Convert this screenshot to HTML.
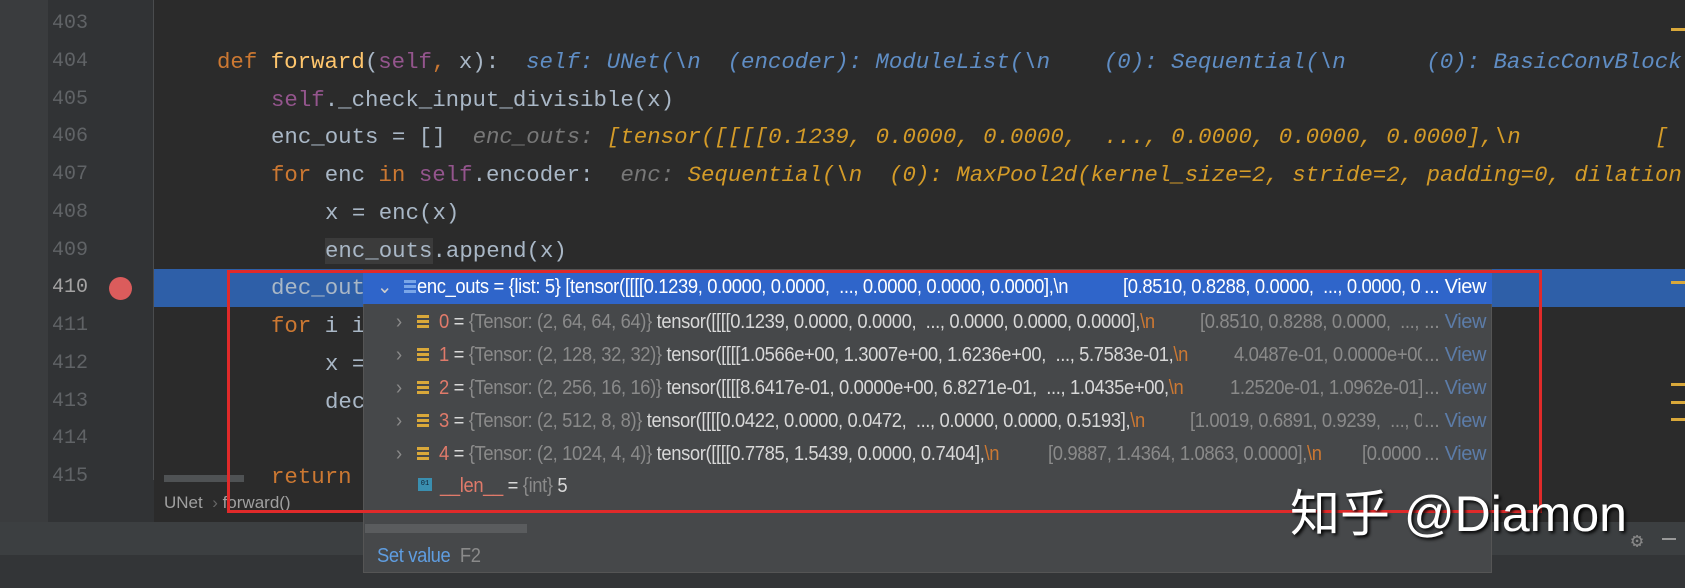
<!DOCTYPE html>
<html><head><meta charset="utf-8"><style>
*{margin:0;padding:0;box-sizing:border-box}
body{width:1685px;height:588px;overflow:hidden;background:#2b2b2b;position:relative;font-family:"Liberation Mono",monospace}
.abs{position:absolute;white-space:pre}
.ln{position:absolute;left:52px;width:40px;color:#606366;font-size:20px;line-height:38px;height:38px}
.code{position:absolute;font-size:22.4px;line-height:38px;height:38px;color:#a9b7c6;white-space:pre}
.kw{color:#cc7832}.fn{color:#ffc66d}.sf{color:#94558d}
.hint{font-style:italic;color:#5f8dc4}
.hg{font-style:italic;color:#787878}
.ho{font-style:italic;color:#d49b28}
.p{font-family:"Liberation Sans",sans-serif;font-size:20px;letter-spacing:-0.4px;color:#d8d8d8;position:absolute;white-space:pre;line-height:22px;transform:scaleX(0.92);transform-origin:0 0}
.g{color:#8a8a8a}.o{color:#cc7832}.r{color:#e07a6a}
.row{position:absolute;left:363px;width:1129px;height:33px;overflow:hidden}
.view{position:absolute;right:6px;color:#5c7ca8;font-family:"Liberation Sans",sans-serif;font-size:20px;letter-spacing:-0.4px;line-height:22px;background:#46484a;padding-left:2px}
.bars{position:absolute;width:12px;height:14px;background:repeating-linear-gradient(#d9a83a 0 3px,transparent 3px 5px)}
</style></head><body>
<div class="abs" style="left:0;top:0;width:48px;height:588px;background:#3a3c3e"></div>
<div class="abs" style="left:48px;top:0;width:106px;height:525px;background:#313335"></div>
<div class="abs" style="left:153px;top:0;width:1px;height:480px;background:#4a4c4e"></div>
<div class="abs" style="left:154px;top:269px;width:1531px;height:38px;background:#2e5fa8"></div>
<div class="ln" style="top:5px">403</div><div class="ln" style="top:43px">404</div><div class="ln" style="top:81px">405</div><div class="ln" style="top:118px">406</div><div class="ln" style="top:156px">407</div><div class="ln" style="top:194px">408</div><div class="ln" style="top:232px">409</div><div class="ln" style="top:269px;color:#a4a3a3">410</div><div class="ln" style="top:307px">411</div><div class="ln" style="top:345px">412</div><div class="ln" style="top:383px">413</div><div class="ln" style="top:420px">414</div><div class="ln" style="top:458px">415</div>
<div class="abs" style="left:109px;top:277px;width:23px;height:23px;border-radius:50%;background:#db5c5c"></div>
<div class="code" style="left:217px;top:43px"><span class="kw">def </span><span class="fn">forward</span>(<span class="sf">self</span><span class="kw">, </span>x):  <span class="hint">self: UNet(\n  (encoder): ModuleList(\n    (0): Sequential(\n      (0): BasicConvBlock</span></div>
<div class="code" style="left:271px;top:81px"><span class="sf">self</span>._check_input_divisible(x)</div>
<div class="code" style="left:271px;top:118px">enc_outs = []  <span class="hg">enc_outs: </span><span class="ho">[tensor([[[[0.1239, 0.0000, 0.0000,  ..., 0.0000, 0.0000, 0.0000],\n          [</span></div>
<div class="code" style="left:271px;top:156px"><span class="kw">for </span>enc <span class="kw">in </span><span class="sf">self</span>.encoder:  <span class="hg">enc: </span><span class="ho">Sequential(\n  (0): MaxPool2d(kernel_size=2, stride=2, padding=0, dilation</span></div>
<div class="code" style="left:325px;top:194px">x = enc(x)</div>
<div class="code" style="left:325px;top:232px"><span style="background:#3b3b3b">enc_outs</span>.append(x)</div>
<div class="code" style="left:271px;top:269px">dec_out</div>
<div class="code" style="left:271px;top:307px"><span class="kw">for </span>i i</div>
<div class="code" style="left:325px;top:345px">x =</div>
<div class="code" style="left:325px;top:383px">dec</div>
<div class="code" style="left:271px;top:458px"><span class="kw">return</span></div>
<div class="abs" style="left:1671px;top:28px;width:14px;height:3px;background:#d9a83a"></div>
<div class="abs" style="left:1671px;top:281px;width:14px;height:3px;background:#d9a83a"></div>
<div class="abs" style="left:1671px;top:383px;width:14px;height:3px;background:#d9a83a"></div>
<div class="abs" style="left:1671px;top:401px;width:14px;height:3px;background:#d9a83a"></div>
<div class="abs" style="left:1671px;top:418px;width:14px;height:3px;background:#d9a83a"></div>
<div class="abs" style="left:164px;top:475px;width:80px;height:7px;background:#4f5254"></div>
<div class="abs" style="left:164px;top:493px;font-family:'Liberation Sans',sans-serif;font-size:17px;color:#a0a0a0">UNet  <span style="color:#666">›</span> forward()</div>
<div class="abs" style="left:0;top:522px;width:1685px;height:33px;background:#3c3f41"></div>
<div class="abs" style="left:0;top:555px;width:1685px;height:33px;background:#333537"></div>
<div class="abs" style="left:363px;top:269px;width:1129px;height:304px;background:#46484a;border:1px solid #555"></div>
<div class="abs" style="left:363px;top:270px;width:1129px;height:34px;background:#2f65ca"></div>
<div class="row" style="top:274px">
<span class="p" style="left:14px;top:2px;color:#ccc">⌄</span>
<div class="abs" style="left:41px;top:6px;width:12px;height:14px;background:repeating-linear-gradient(#7aa6e8 0 3px,transparent 3px 5px)"></div>
<span class="p" style="left:54px;top:2px;color:#fff">enc_outs = {list: 5} [tensor([[[[0.1239, 0.0000, 0.0000,  ..., 0.0000, 0.0000, 0.0000],\n</span>
<span class="p" style="left:760px;top:2px;color:#fff">[0.8510, 0.8288, 0.0000,  ..., 0.0000, 0.0(</span>
<span class="view" style="top:2px;color:#fff;background:#2f65ca">... View</span></div>
<div class="row" style="top:306px"><span class="p g" style="left:33px;top:5px">›</span><div class="bars" style="left:54px;top:9px"></div><span class="p" style="left:76px;top:5px"><span class="r">0</span> = <span class="g">{Tensor: (2, 64, 64, 64)}</span> tensor([[[[0.1239, 0.0000, 0.0000,  ..., 0.0000, 0.0000, 0.0000],<span class="o">\n</span></span><span class="p g" style="left:837px;top:5px">[0.8510, 0.8288, 0.0000,  ..., 0.</span><span class="view" style="top:5px"><span class="g">...</span> View</span></div>
<div class="row" style="top:339px"><span class="p g" style="left:33px;top:5px">›</span><div class="bars" style="left:54px;top:9px"></div><span class="p" style="left:76px;top:5px"><span class="r">1</span> = <span class="g">{Tensor: (2, 128, 32, 32)}</span> tensor([[[[1.0566e+00, 1.3007e+00, 1.6236e+00,  ..., 5.7583e-01,<span class="o">\n</span></span><span class="p g" style="left:871px;top:5px">4.0487e-01, 0.0000e+00]</span><span class="view" style="top:5px"><span class="g">...</span> View</span></div>
<div class="row" style="top:372px"><span class="p g" style="left:33px;top:5px">›</span><div class="bars" style="left:54px;top:9px"></div><span class="p" style="left:76px;top:5px"><span class="r">2</span> = <span class="g">{Tensor: (2, 256, 16, 16)}</span> tensor([[[[8.6417e-01, 0.0000e+00, 6.8271e-01,  ..., 1.0435e+00,<span class="o">\n</span></span><span class="p g" style="left:867px;top:5px">1.2520e-01, 1.0962e-01],<span class="o">\</span></span><span class="view" style="top:5px"><span class="g">...</span> View</span></div>
<div class="row" style="top:405px"><span class="p g" style="left:33px;top:5px">›</span><div class="bars" style="left:54px;top:9px"></div><span class="p" style="left:76px;top:5px"><span class="r">3</span> = <span class="g">{Tensor: (2, 512, 8, 8)}</span> tensor([[[[0.0422, 0.0000, 0.0472,  ..., 0.0000, 0.0000, 0.5193],<span class="o">\n</span></span><span class="p g" style="left:827px;top:5px">[1.0019, 0.6891, 0.9239,  ..., 0.6</span><span class="view" style="top:5px"><span class="g">...</span> View</span></div>
<div class="row" style="top:438px"><span class="p g" style="left:33px;top:5px">›</span><div class="bars" style="left:54px;top:9px"></div><span class="p" style="left:76px;top:5px"><span class="r">4</span> = <span class="g">{Tensor: (2, 1024, 4, 4)}</span> tensor([[[[0.7785, 1.5439, 0.0000, 0.7404],<span class="o">\n</span></span><span class="p g" style="left:685px;top:5px">[0.9887, 1.4364, 1.0863, 0.0000],<span class="o">\n</span></span><span class="p g" style="left:999px;top:5px">[0.0000, (</span><span class="view" style="top:5px"><span class="g">...</span> View</span></div>
<div class="abs" style="left:418px;top:478px;width:14px;height:13px;background:#3a8fb0;font-size:7px;color:#123;text-align:center;line-height:13px">01</div>
<span class="p" style="left:440px;top:475px"><span class="r">__len__</span> = <span class="g">{int}</span> 5</span>
<div class="abs" style="left:365px;top:524px;width:162px;height:9px;background:#5a5c5e"></div>
<span class="p" style="left:377px;top:545px;color:#5f9de0">Set value  <span class="g">F2</span></span>
<div class="abs" style="left:227px;top:270px;width:1315px;height:243px;border:3px solid #e02a2a"></div>
<div class="abs" style="left:1290px;top:484px;font-family:'Liberation Sans','Noto Sans CJK SC',sans-serif;font-size:50px;color:#fff;text-shadow:2px 2px 3px #000;line-height:60px">知乎 @Diamon</div>
<div class="abs" style="left:1631px;top:528px;font-size:20px;color:#888">⚙</div>
<div class="abs" style="left:1662px;top:538px;width:14px;height:2px;background:#999"></div>
</body></html>
